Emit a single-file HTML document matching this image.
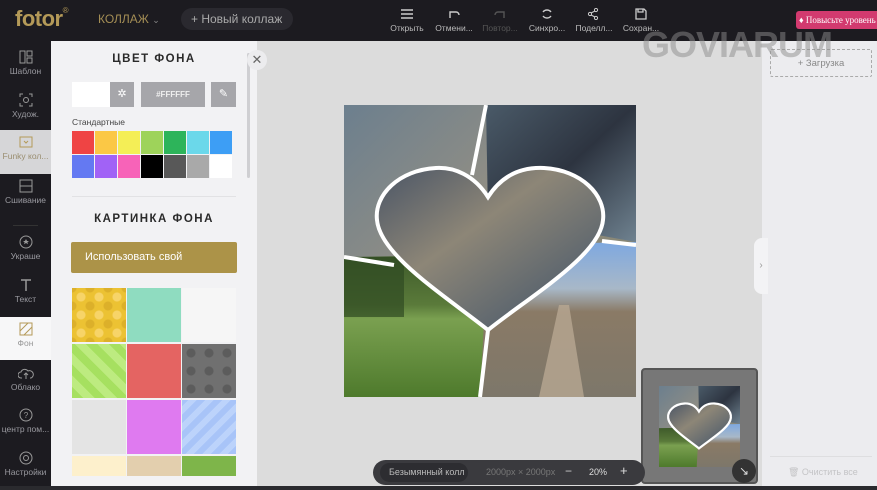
<!DOCTYPE html>
<html><head><meta charset="utf-8"><style>
*{margin:0;padding:0;box-sizing:border-box}
body{width:877px;height:490px;overflow:hidden;background:#dcdcdc;font-family:"Liberation Sans","DejaVu Sans",sans-serif;position:relative}
.abs{position:absolute}
#top{left:0;top:0;width:877px;height:41px;background:#1c1b20}
#side{left:0;top:41px;width:51px;height:449px;background:#1c1b20}
.si{position:absolute;left:0;width:51px;height:43px;text-align:center;color:#9a9aa0;font-size:8.5px}
.si svg{display:block;margin:5px auto 2px}
#panel{left:51px;top:41px;width:206px;height:449px;background:#f2f2f4}
.h{position:absolute;width:206px;text-align:center;font-size:11.5px;letter-spacing:1.5px;color:#2a2a2a;font-weight:bold}
.sw{position:absolute;width:22px;height:23px}
.pat{position:absolute;width:54px;height:54px}
.ti{position:absolute;top:8px;text-align:center;color:#bbb;font-size:8.5px;width:44px}
.ti svg{display:block;margin:0 auto 3px}
</style></head><body>
<div id="top" class="abs">
 <div class="abs" style="left:15px;top:6px;font-size:22px;font-weight:bold;color:#b49a58;letter-spacing:-0.5px">fotor<span style="font-size:8px;vertical-align:top;font-weight:normal">®</span></div>
 <div class="abs" style="left:98px;top:12px;font-size:12px;color:#a48e55">КОЛЛАЖ <span style="font-size:9px;color:#888">⌄</span></div>
 <div class="abs" style="left:181px;top:8px;width:112px;height:22px;border-radius:11px;background:#2a292f;color:#aaa;font-size:12px;line-height:22px;padding-left:10px">+ Новый коллаж</div>
 <div class="ti" style="left:385px"><svg width="14" height="12"><path d="M1 2h12M1 6h12M1 10h12" stroke="#ccc" stroke-width="1.4"/></svg>Открыть</div>
 <div class="ti" style="left:432px"><svg width="14" height="12"><path d="M3 10V4h6a3 3 0 013 3" fill="none" stroke="#ccc" stroke-width="1.4"/></svg>Отмени...</div>
 <div class="ti" style="left:478px;color:#555"><svg width="14" height="12"><path d="M11 10V4H5a3 3 0 00-3 3" fill="none" stroke="#555" stroke-width="1.4"/></svg>Повтор...</div>
 <div class="ti" style="left:525px"><svg width="14" height="12"><path d="M3 4a5 5 0 018 0M11 8a5 5 0 01-8 0" fill="none" stroke="#ccc" stroke-width="1.4"/></svg>Синхро...</div>
 <div class="ti" style="left:572px"><svg width="14" height="12"><circle cx="9" cy="2" r="1.6" fill="none" stroke="#ccc"/><circle cx="3" cy="6" r="1.6" fill="none" stroke="#ccc"/><circle cx="9" cy="10" r="1.6" fill="none" stroke="#ccc"/><path d="M4 5l4-2M4 7l4 2" stroke="#ccc"/></svg>Поделл...</div>
 <div class="ti" style="left:619px"><svg width="14" height="12"><path d="M2 1h8l2 2v8H2z M4 1v3h5V1" fill="none" stroke="#ccc" stroke-width="1.3"/></svg>Сохран...</div>
 <div class="abs" style="left:796px;top:11px;width:81px;height:18px;background:#d23a6f;border-radius:3px 0 0 3px;color:#fff;font-size:9px;line-height:18px;padding-left:3px;font-family:'Liberation Serif',serif;white-space:nowrap;overflow:hidden">♦ Повысьте уровень</div>
</div>
<div id="side" class="abs">
 <div class="si" style="top:4px"><svg width="14" height="14"><rect x="1" y="1" width="5" height="12" fill="none" stroke="#999"/><rect x="8" y="1" width="5" height="5" fill="none" stroke="#999"/><rect x="8" y="8" width="5" height="5" fill="none" stroke="#999"/></svg>Шаблон</div>
 <div class="si" style="top:47px"><svg width="14" height="14"><path d="M1 4V1h3M10 1h3v3M13 10v3h-3M4 13H1v-3" fill="none" stroke="#999"/><circle cx="7" cy="7" r="2.5" fill="none" stroke="#999"/></svg>Худож.</div>
 <div class="si" style="top:89px;background:#d6d6d8;color:#9a8e70;height:44px"><svg width="14" height="14"><rect x="1" y="2" width="12" height="10" fill="none" stroke="#b49a58"/><path d="M5 6l2 2 2-2" fill="none" stroke="#b49a58"/></svg>Funky кол...</div>
 <div class="si" style="top:133px"><svg width="14" height="14"><rect x="1" y="1" width="12" height="12" fill="none" stroke="#999"/><path d="M1 7h12" stroke="#999"/></svg>Сшивание</div>
 <div class="abs" style="left:13px;top:184px;width:25px;height:1px;background:#333"></div>
 <div class="si" style="top:189px"><svg width="14" height="14"><circle cx="7" cy="7" r="6" fill="none" stroke="#999"/><path d="M7 4l1 2h2l-1.6 1.2.6 2L7 8l-2 1.2.6-2L4 6h2z" fill="#999"/></svg>Украше</div>
 <div class="si" style="top:232px"><svg width="14" height="14"><path d="M2 2h10M7 2v11" stroke="#999" stroke-width="1.5"/></svg>Текст</div>
 <div class="si" style="top:276px;background:#f7f7f8;color:#999"><svg width="14" height="14"><rect x="1" y="1" width="12" height="12" fill="none" stroke="#b49a58"/><path d="M1 9l8-8M5 13l8-8" stroke="#b49a58"/></svg>Фон</div>
 <div class="si" style="top:320px"><svg width="16" height="14"><path d="M4 12H3a3 3 0 010-6 4 4 0 017-1 3 3 0 013 7h-1M8 13V7M6 9l2-2 2 2" fill="none" stroke="#999"/></svg>Облако</div>
 <div class="si" style="top:362px"><svg width="14" height="14"><circle cx="7" cy="7" r="6" fill="none" stroke="#999"/><text x="7" y="10" font-size="8" text-anchor="middle" fill="#999">?</text></svg>центр пом...</div>
 <div class="si" style="top:405px"><svg width="14" height="14"><circle cx="7" cy="7" r="6" fill="none" stroke="#999"/><circle cx="7" cy="7" r="2.5" fill="none" stroke="#999"/></svg>Настройки</div>
</div>
<div id="panel" class="abs">
 <div class="h" style="top:12px">ЦВЕТ ФОНА</div>
 <div class="abs" style="left:21px;top:41px;width:38px;height:25px;background:#fff"></div>
 <div class="abs" style="left:59px;top:41px;width:24px;height:25px;background:#a6a6aa;color:#fff;text-align:center;line-height:25px;font-size:11px">✲</div>
 <div class="abs" style="left:90px;top:41px;width:64px;height:25px;background:#a6a6aa;color:#eee;text-align:center;line-height:25px;font-size:8px;font-weight:bold">#FFFFFF</div>
 <div class="abs" style="left:160px;top:41px;width:25px;height:25px;background:#a6a6aa;color:#fff;text-align:center;line-height:25px;font-size:11px">✎</div>
 <div class="abs" style="left:21px;top:76px;font-size:8.5px;color:#444">Стандартные</div>
 <div class="sw" style="left:21px;top:90px;background:#ef4444"></div><div class="sw" style="left:44px;top:90px;background:#fbc845"></div><div class="sw" style="left:67px;top:90px;background:#f4ee56"></div><div class="sw" style="left:90px;top:90px;background:#9ed35a"></div><div class="sw" style="left:113px;top:90px;background:#2db45a"></div><div class="sw" style="left:136px;top:90px;background:#6bd8ea"></div><div class="sw" style="left:159px;top:90px;background:#3d9ef5"></div>
 <div class="sw" style="left:21px;top:114px;background:#6479f2"></div><div class="sw" style="left:44px;top:114px;background:#a162f6"></div><div class="sw" style="left:67px;top:114px;background:#f763b8"></div><div class="sw" style="left:90px;top:114px;background:#000"></div><div class="sw" style="left:113px;top:114px;background:#585858"></div><div class="sw" style="left:136px;top:114px;background:#a9a9a9"></div><div class="sw" style="left:159px;top:114px;background:#fff"></div>
 <div class="abs" style="left:196px;top:12px;width:3px;height:125px;background:#cfcfd2;border-radius:2px"></div>
 <div class="abs" style="left:21px;top:155px;width:164px;height:1px;background:#e2e2e4"></div>
 <div class="h" style="top:172px">КАРТИНКА ФОНА</div>
 <div class="abs" style="left:20px;top:201px;width:166px;height:31px;background:#ac9348;border-radius:2px;color:#fff;font-size:11px;line-height:31px;padding-left:14px">Использовать свой</div>
 <div class="pat" style="left:21px;top:247px;background:radial-gradient(circle,#f7d468 4px,transparent 5px) 0 0/18px 18px,radial-gradient(circle,#dcb02a 4px,transparent 5px) 9px 9px/18px 18px,#ecc233"></div>
 <div class="pat" style="left:76px;top:247px;background:#8fdcc0"></div>
 <div class="pat" style="left:131px;top:247px;background:#f6f6f6"></div>
 <div class="pat" style="left:21px;top:303px;background:repeating-linear-gradient(45deg,#a6e060 0 8px,#bdeb80 8px 16px)"></div>
 <div class="pat" style="left:76px;top:303px;background:#e46462"></div>
 <div class="pat" style="left:131px;top:303px;background:radial-gradient(circle,#5c5c5c 4px,transparent 5px) 0 0/18px 18px,#707070"></div>
 <div class="pat" style="left:21px;top:359px;background:#e4e4e4"></div>
 <div class="pat" style="left:76px;top:359px;background:#df7af0"></div>
 <div class="pat" style="left:131px;top:359px;background:repeating-linear-gradient(-45deg,#a8c4f8 0 6px,#bcd3fb 6px 12px)"></div>
 <div class="pat" style="left:21px;top:415px;height:20px;background:#fdf0cc"></div>
 <div class="pat" style="left:76px;top:415px;height:20px;background:#e3cfae"></div>
 <div class="pat" style="left:131px;top:415px;height:20px;background:#7eb54a"></div>
</div>
<div class="abs" style="left:247px;top:50px;width:20px;height:20px;border-radius:50%;background:#ececee;color:#666;font-size:13px;text-align:center;line-height:20px">✕</div>
<div class="abs" style="left:762px;top:41px;width:115px;height:449px;background:#ececef"></div>
<div class="abs" style="left:770px;top:49px;width:102px;height:28px;border:1px dashed #aaa;border-radius:2px;color:#888;font-size:9.5px;text-align:center;line-height:28px">+ Загрузка</div>
<div class="abs" style="left:770px;top:456px;width:102px;height:1px;background:#dedee0"></div>
<div class="abs" style="left:788px;top:467px;font-size:9px;color:#c4c4c6">🗑 Очистить все</div>
<div class="abs" style="left:754px;top:238px;width:14px;height:56px;background:#f3f3f5;border-radius:8px 0 0 8px;color:#999;font-size:10px;line-height:56px;text-align:center">›</div>
<div class="abs" style="left:642px;top:24px;font-size:36px;font-weight:bold;color:rgba(140,140,140,0.5);letter-spacing:-1px">GOVIARUM</div>
<svg class="abs" style="left:344px;top:105px" width="292" height="292" viewBox="0 0 292 292">
 <defs>
  <linearGradient id="bl" x1="0" y1="0" x2="1" y2="1"><stop offset="0" stop-color="#6c7f8e"/><stop offset=".5" stop-color="#9a9282"/><stop offset="1" stop-color="#6e7766"/></linearGradient>
  <linearGradient id="tr" x1="0" y1="0" x2="1" y2="1"><stop offset="0" stop-color="#4a5a68"/><stop offset=".5" stop-color="#2d3440"/><stop offset="1" stop-color="#6f8290"/></linearGradient>
  <linearGradient id="ht" x1="0" y1="0" x2="1" y2="1"><stop offset="0" stop-color="#4a5566"/><stop offset=".4" stop-color="#8d8677"/><stop offset="1" stop-color="#3c5068"/></linearGradient>
  <linearGradient id="fl" x1="0" y1="0" x2="0" y2="1"><stop offset="0" stop-color="#3e5a2a"/><stop offset=".35" stop-color="#5a7a3a"/><stop offset=".45" stop-color="#7aa050"/><stop offset="1" stop-color="#4e7a2c"/></linearGradient>
  <linearGradient id="rd" x1="0" y1="0" x2="0" y2="1"><stop offset="0" stop-color="#7ea8e0"/><stop offset=".3" stop-color="#a8b8c8"/><stop offset=".45" stop-color="#8a7a66"/><stop offset="1" stop-color="#7d776a"/></linearGradient>
 </defs>
 <rect width="292" height="292" fill="url(#bl)"/>
 <polygon points="142,0 292,0 292,137 144,110" fill="url(#tr)"/>
 <polygon points="0,152 144,150 140,292 0,292" fill="url(#fl)"/>
 <rect x="0" y="152" width="60" height="60" fill="#2f4a22" opacity=".7"/>
 <polygon points="144,140 292,137 292,292 136,292" fill="url(#rd)"/>
 <polygon points="195,292 215,200 225,200 240,292" fill="#b8a892" opacity=".8"/>
 <path d="M142,0 L128,70 M0,152 L50,160 M258,136 L292,140 M144,225 L136,292" stroke="#fff" stroke-width="4"/>
 <path d="M144,92 C130,70 110,62 92,63 C55,65 30,90 33,115 C36,150 100,190 144,225 C188,190 256,150 259,115 C262,90 237,65 200,63 C178,62 158,70 144,92 Z" fill="url(#ht)" stroke="#fff" stroke-width="4"/>
</svg>
<div class="abs" style="left:641px;top:368px;width:117px;height:116px;background:#777;border:2px solid #555;border-radius:4px"></div>
<svg class="abs" style="left:659px;top:386px" width="81" height="81" viewBox="0 0 292 292">
 <rect width="292" height="292" fill="url(#bl)"/>
 <polygon points="142,0 292,0 292,137 144,110" fill="url(#tr)"/>
 <polygon points="0,152 144,150 140,292 0,292" fill="url(#fl)"/>
 <polygon points="144,140 292,137 292,292 136,292" fill="url(#rd)"/>
 <path d="M144,92 C130,70 110,62 92,63 C55,65 30,90 33,115 C36,150 100,190 144,225 C188,190 256,150 259,115 C262,90 237,65 200,63 C178,62 158,70 144,92 Z" fill="url(#ht)" stroke="#fff" stroke-width="8"/>
</svg>
<div class="abs" style="left:732px;top:459px;width:24px;height:24px;border-radius:50%;background:#333;color:#ddd;font-size:12px;text-align:center;line-height:24px">↘</div>
<div class="abs" style="left:373px;top:460px;width:272px;height:25px;border-radius:13px;background:#3a3a3e"></div>
<div class="abs" style="left:380px;top:463px;width:88px;height:19px;border-radius:10px;background:#2d2d31;color:#bbb;font-size:9px;line-height:19px;padding-left:9px;white-space:nowrap;overflow:hidden">Безымянный колл</div>
<div class="abs" style="left:486px;top:467px;font-size:9px;color:#777">2000px × 2000px</div>
<div class="abs" style="left:565px;top:464px;font-size:12px;color:#ccc">−</div>
<div class="abs" style="left:589px;top:467px;font-size:9px;color:#ddd">20%</div>
<div class="abs" style="left:620px;top:463px;font-size:13px;color:#ddd">+</div>
<div class="abs" style="left:0;top:486px;width:877px;height:4px;background:#2a2a2e"></div>
</body></html>
